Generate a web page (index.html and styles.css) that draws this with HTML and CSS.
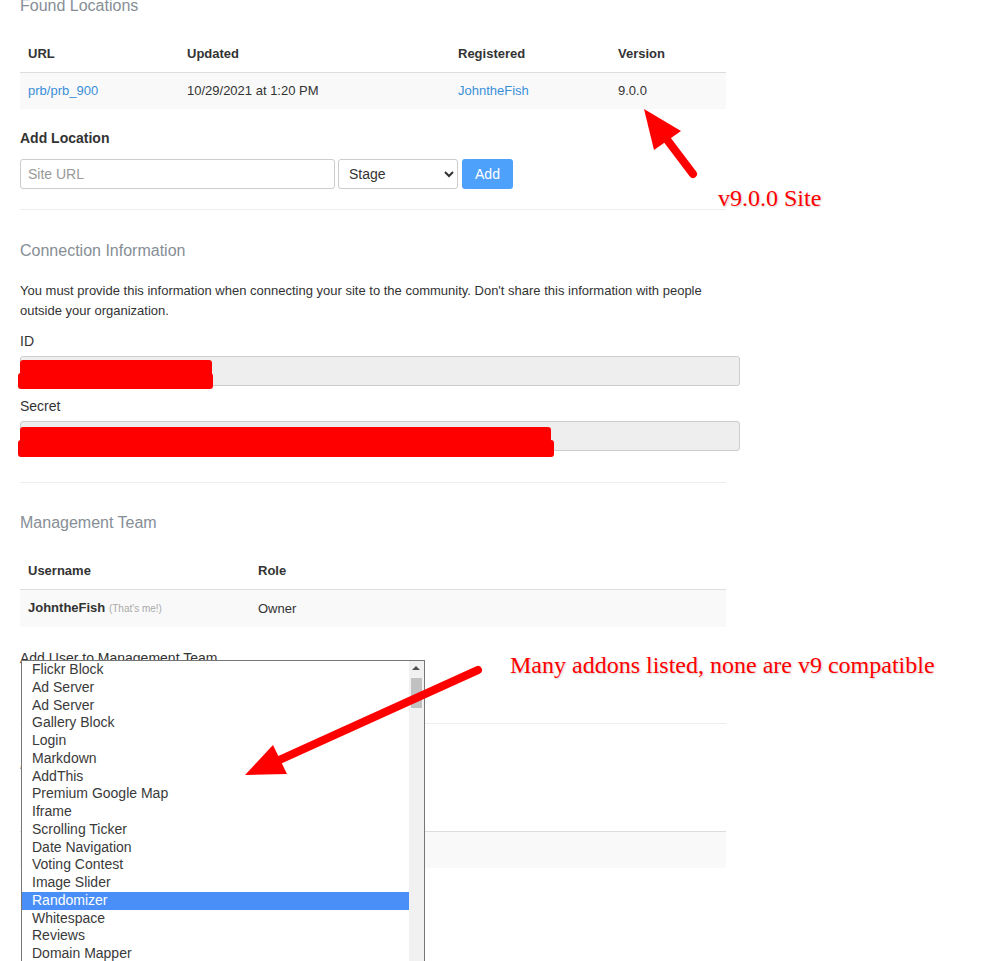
FILE: index.html
```html
<!DOCTYPE html>
<html lang="en">
<head>
    <meta charset="UTF-8">
    <meta name="viewport" content="width=device-width, initial-scale=1.0">
    <title>Project Details</title>
    <link rel="stylesheet" href="styles.css">
</head>
<body>

    <div class="page">
        <!-- Found locations -->
        <h3 class="section-title first">Found Locations</h3>
        <table class="data-table locations">
            <thead>
                <tr>
                    <th class="col-url">URL</th>
                    <th class="col-updated">Updated</th>
                    <th class="col-registered">Registered</th>
                    <th>Version</th>
                </tr>
            </thead>
            <tbody>
                <tr>
                    <td><a href="#">prb/prb_900</a></td>
                    <td>10/29/2021 at 1:20 PM</td>
                    <td><a href="#">JohntheFish</a></td>
                    <td>9.0.0</td>
                </tr>
            </tbody>
        </table>

        <h4 class="sub-title">Add Location</h4>
        <div class="form-row">
            <input class="text-input" type="text" placeholder="Site URL">
            <select class="stage-select">
                <option>Stage</option>
            </select>
            <button class="btn-add">Add</button>
        </div>

        <hr class="divider first-divider">

        <!-- Connection info -->
        <h3 class="section-title">Connection Information</h3>
        <p class="info-text">You must provide this information when connecting your site to the community. Don't share this information with people outside your organization.</p>
        <label class="field-label">ID</label>
        <div class="readonly-field"></div>
        <label class="field-label">Secret</label>
        <div class="readonly-field"></div>

        <hr class="divider low">

        <!-- Management team -->
        <h3 class="section-title">Management Team</h3>
        <table class="data-table team">
            <thead>
                <tr>
                    <th class="col-user">Username</th>
                    <th>Role</th>
                </tr>
            </thead>
            <tbody>
                <tr>
                    <td><strong>JohntheFish</strong> <span class="me">(That's me!)</span></td>
                    <td>Owner</td>
                </tr>
            </tbody>
        </table>

        <label class="field-label team-label">Add User to Management Team</label>
        <div class="form-row hidden-row"></div>

        <hr class="divider">

        <h3 class="section-title">Add-ons</h3>
        <table class="data-table addons">
            <thead>
                <tr><th>&nbsp;</th></tr>
            </thead>
            <tbody>
                <tr><td>&nbsp;</td></tr>
            </tbody>
        </table>
    </div>

    <!-- Open listbox -->
    <div class="listbox">
        <ul class="options">
            <li>Flickr Block</li>
            <li>Ad Server</li>
            <li>Ad Server</li>
            <li>Gallery Block</li>
            <li>Login</li>
            <li>Markdown</li>
            <li>AddThis</li>
            <li>Premium Google Map</li>
            <li>Iframe</li>
            <li>Scrolling Ticker</li>
            <li>Date Navigation</li>
            <li>Voting Contest</li>
            <li>Image Slider</li>
            <li class="selected">Randomizer</li>
            <li>Whitespace</li>
            <li>Reviews</li>
            <li>Domain Mapper</li>
            <li>Calendar</li>
        </ul>
        <div class="scrollbar">
            <span class="scroll-up"></span>
            <span class="scroll-thumb"></span>
        </div>
    </div>

    <!-- Annotations -->
    <svg class="marks" width="994" height="961" viewBox="0 0 994 961">
        <rect x="20" y="360" width="192" height="18" rx="3" fill="#ff0000"/>
        <rect x="18" y="373" width="195" height="16" rx="3" fill="#ff0000"/>
        <rect x="20" y="427" width="531" height="16" rx="3" fill="#ff0000"/>
        <rect x="18" y="440" width="536" height="17" rx="3" fill="#ff0000"/>

        <line x1="693" y1="174" x2="665" y2="137" stroke="#ff0000" stroke-width="8" stroke-linecap="round"/>
        <polygon points="644,109 654,150 681,131" fill="#ff0000"/>

        <line x1="478" y1="670" x2="275" y2="762" stroke="#ff0000" stroke-width="8" stroke-linecap="round"/>
        <polygon points="245,775 273,745 287,774" fill="#ff0000"/>
    </svg>
    <span class="note note-site">v9.0.0 Site</span>
    <span class="note note-addons">Many addons listed, none are v9 compatible</span>

</body>
</html>
```

FILE: styles.css
```css
* {
    box-sizing: border-box;
}
body {
    margin: 0;
    background: #fff;
    color: #333;
    font-family: "Liberation Sans", Arial, sans-serif;
    font-size: 13px;
}
.page {
    width: 746px;
    padding: 0 20px;
}
.section-title {
    font-size: 16px;
    font-weight: normal;
    line-height: 18px;
    color: #868e96;
    margin: 0;
}
.section-title.first {
    margin-top: -3px;
}
.data-table {
    width: 706px;
    border-collapse: collapse;
    margin-top: 20px;
}
.data-table th {
    text-align: left;
    font-weight: bold;
    line-height: 20px;
    padding: 8px;
    border-bottom: 1px solid #ddd;
}
.data-table td {
    line-height: 20px;
    padding: 8px;
    background: #f9f9f9;
}
.data-table a {
    color: #3a8fd9;
    text-decoration: none;
}
.locations {
    margin-top: 21px;
}
.col-url { width: 159px; }
.col-updated { width: 271px; }
.col-registered { width: 160px; }
.col-user { width: 230px; }
.team {
    margin-top: 21px;
}
.me {
    font-size: 10px;
    color: #aaa;
}
.sub-title {
    font-size: 14px;
    line-height: 20px;
    margin: 19px 0 0;
}
.form-row {
    display: flex;
    height: 30px;
    margin-top: 11px;
}
.text-input {
    width: 315px;
    height: 30px;
    border: 1px solid #ccc;
    border-radius: 3px;
    padding: 0 7px;
    font-family: inherit;
    font-size: 14px;
    color: #333;
}
.text-input::placeholder {
    color: #999;
}
.stage-select {
    width: 120px;
    height: 30px;
    margin-left: 3px;
    border: 1px solid #ccc;
    border-radius: 3px;
    background: #fff;
    padding-left: 6px;
    font-family: inherit;
    font-size: 14px;
    color: #333;
}
.btn-add {
    width: 51px;
    height: 30px;
    margin-left: 4px;
    border: none;
    border-radius: 3px;
    background: #4ea1fb;
    color: #fff;
    font-family: inherit;
    font-size: 14px;
}
.divider {
    border: 0;
    border-top: 1px solid #eee;
    margin: 20px 0 31px;
    width: 706px;
}
.divider.first-divider {
    margin-bottom: 32px;
}
.divider.low {
    margin-top: 31px;
}
.info-text {
    line-height: 20px;
    margin: 21px 0 0;
    width: 706px;
}
.field-label {
    display: block;
    font-size: 14px;
    line-height: 20px;
    margin-top: 10px;
}
.readonly-field {
    width: 720px;
    height: 30px;
    margin-top: 5px;
    background: #eee;
    border: 1px solid #ccc;
    border-radius: 3px;
}
.team-label {
    margin-top: 21px;
}
.hidden-row {
    margin-top: 5px;
}
.hidden-row + .divider {
    margin-top: 20px;
}
.addons {
    margin-top: 22px;
}

/* open dropdown list */
.listbox {
    position: absolute;
    left: 21px;
    top: 660px;
    width: 404px;
    height: 320px;
    border: 1px solid #767676;
    background: #fff;
    overflow: hidden;
    display: flex;
}
.options {
    list-style: none;
    margin: 0;
    padding: 0;
    flex: 1;
}
.options li {
    height: 17.75px;
    line-height: 17.75px;
    padding-left: 10px;
    font-size: 14px;
    color: #3a3a3a;
    white-space: nowrap;
}
.options li.selected {
    background: #4a8ff8;
    color: #fff;
}
.scrollbar {
    width: 15px;
    background: #f1f1f1;
    position: relative;
}
.scroll-up {
    position: absolute;
    left: 3px;
    top: 5px;
    width: 0;
    height: 0;
    border-left: 4px solid transparent;
    border-right: 4px solid transparent;
    border-bottom: 4px solid #505050;
}
.scroll-thumb {
    position: absolute;
    left: 2px;
    top: 17px;
    width: 11px;
    height: 30px;
    background: #c1c1c1;
}

/* annotations */
.marks {
    position: absolute;
    left: 0;
    top: 0;
    pointer-events: none;
}
.note {
    position: absolute;
    font-family: "Liberation Serif", "Times New Roman", serif;
    font-size: 24px;
    line-height: 28px;
    color: #ff0000;
    text-shadow: 1px 1px 2px rgba(0, 0, 0, 0.2);
    white-space: nowrap;
}
.note-site {
    left: 718px;
    top: 184px;
}
.note-addons {
    left: 510px;
    top: 651px;
}
```
